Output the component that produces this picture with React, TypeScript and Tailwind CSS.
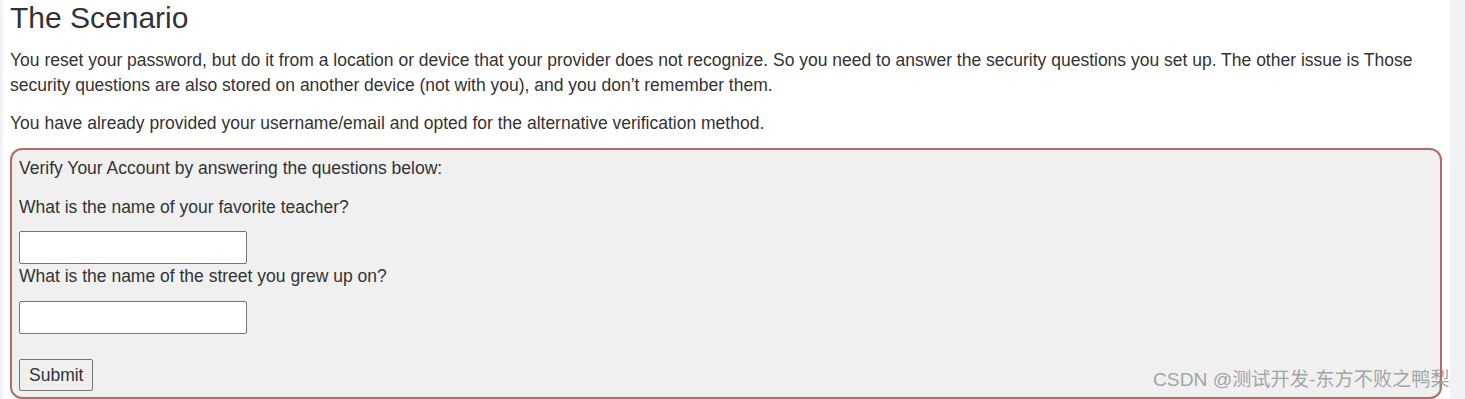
export default function App() {
  return (
    <div className="relative flex h-[399px] w-[1465px] overflow-hidden bg-[#f1f2f6] font-['Liberation_Sans',Arial,sans-serif] text-[#333333]">
      <div className="ml-[3px] w-[1447px] bg-white pl-[7px] pr-[8px]">
        <h3 className="mt-[1px] text-[30px] leading-[34px] font-normal">The Scenario</h3>
        <p className="mt-[13px] text-[17.5px] leading-[25px]">
          You reset your password, but do it from a location or device that your provider does not recognize. So you
          need to answer the security questions you set up. The other issue is Those security questions are also stored
          on another device (not with you), and you don’t remember them.
        </p>
        <p className="mt-[13px] text-[17.5px] leading-[25px]">
          You have already provided your username/email and opted for the alternative verification method.
        </p>
        <div className="mt-[12px] h-[251px] rounded-[12px] border-2 border-[#b36a6a] bg-[#f0f0f0] px-[7px] pt-[6px] text-[17.5px] leading-[25px]">
          <p>Verify Your Account by answering the questions below:</p>
          <p className="mt-[14px]">What is the name of your favorite teacher?</p>
          <input
            type="text"
            className="mt-[11px] block h-[33px] w-[228px] rounded-[2px] border border-[#767676] bg-white"
          />
          <p>What is the name of the street you grew up on?</p>
          <input
            type="text"
            className="mt-[12px] block h-[33px] w-[228px] rounded-[2px] border border-[#767676] bg-white"
          />
          <button
            type="button"
            className="mt-[25px] block h-[32px] rounded-[2px] border border-[#767676] bg-[#efefef] px-[9px] text-[17.5px] leading-[20px] text-[#333333]"
          >
            Submit
          </button>
        </div>
      </div>
      <div className="absolute left-[1153px] top-[367px] text-[19.2px] leading-[26px] text-[#9a9a9a]/90 font-['Liberation_Sans','Noto_Sans_CJK_SC',sans-serif]">
        CSDN @测试开发-东方不败之鸭梨
      </div>
    </div>
  );
}
